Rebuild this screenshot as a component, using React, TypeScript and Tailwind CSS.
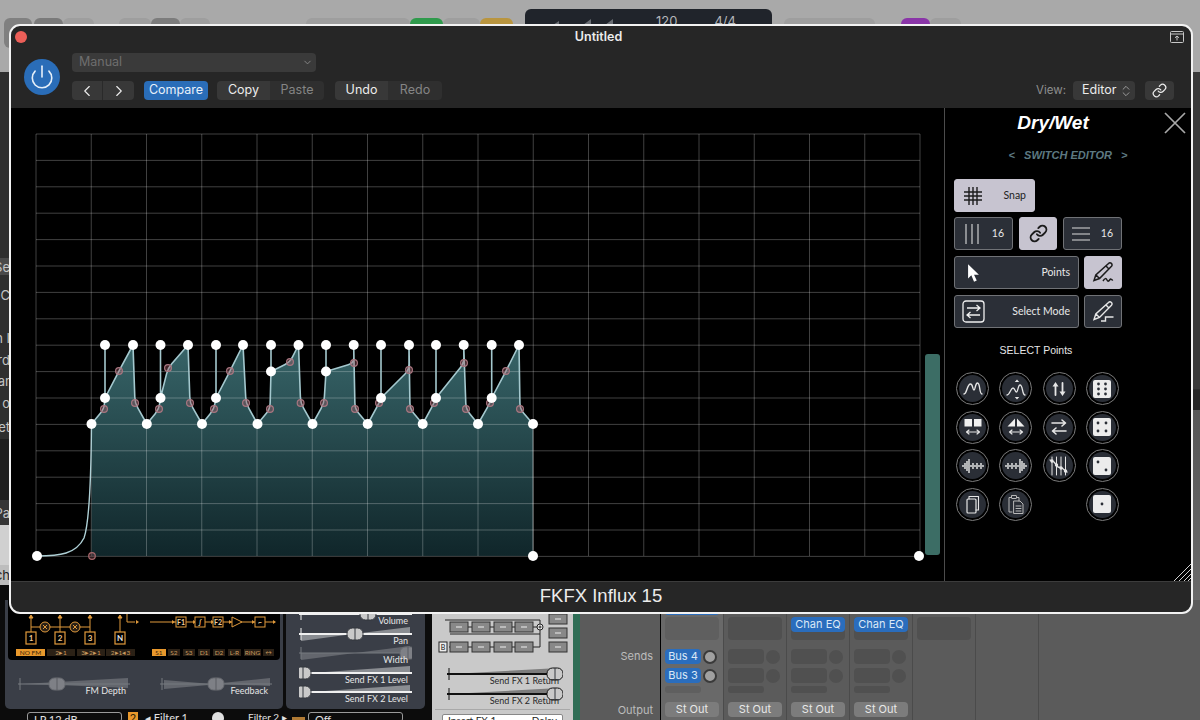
import { ChevronDown, ChevronLeft, ChevronRight, ChevronsUpDown, Link, Power } from 'lucide-react';
import type { ReactNode } from 'react';

type Pt = [number, number];

const teeth: { x: number; mid: Pt; h1: Pt; t1: number; t2: number; h2: Pt; h3: Pt }[] = [
  { x: 91.5, mid: [105, 398], h1: [104, 409], t1: 105, t2: 133, h2: [119, 371], h3: [135, 403] },
  { x: 146.8, mid: [160.5, 398], h1: [159, 409], t1: 160.5, t2: 188, h2: [168, 368], h3: [190, 403] },
  { x: 202, mid: [216, 398], h1: [214, 409], t1: 216, t2: 243, h2: [230, 371], h3: [246, 403] },
  { x: 257.5, mid: [271, 371.5], h1: [270, 409], t1: 271, t2: 298.5, h2: [290, 362], h3: [300.6, 403] },
  { x: 312.5, mid: [326, 371.5], h1: [324, 403], t1: 326, t2: 353.7, h2: [354, 363], h3: [355, 409] },
  { x: 367.7, mid: [381, 398], h1: [379, 403], t1: 381, t2: 409, h2: [409, 370], h3: [410, 409] },
  { x: 422.7, mid: [436, 398], h1: [434, 403], t1: 436, t2: 463.7, h2: [464, 363], h3: [466, 409] },
  { x: 478, mid: [491.7, 398], h1: [490, 403], t1: 491.7, t2: 519, h2: [506, 371], h3: [520, 409] },
];
const END_X = 533;
const BASE_Y = 424;
const TOP_Y = 345;

// line to the handle with a small rounded corner, then on to b
function via(a: Pt, h: Pt, b: Pt) {
  const toward = (from: Pt, to: Pt, d: number): Pt => {
    const len = Math.hypot(to[0] - from[0], to[1] - from[1]) || 1;
    return [from[0] + ((to[0] - from[0]) * d) / len, from[1] + ((to[1] - from[1]) * d) / len];
  };
  const p1 = toward(h, a, 6);
  const p2 = toward(h, b, 6);
  return `L${p1[0]} ${p1[1]} Q${h[0]} ${h[1]} ${p2[0]} ${p2[1]} L${b[0]} ${b[1]}`;
}

function teethPath() {
  let d = `M91.5 ${BASE_Y}`;
  teeth.forEach((t, i) => {
    const next = i < teeth.length - 1 ? teeth[i + 1].x : END_X;
    d += ' ' + via([t.x, BASE_Y], t.h1, t.mid);
    d += ` L${t.t1} ${TOP_Y} L${t.mid[0]} ${t.mid[1]}`;
    d += ' ' + via(t.mid, t.h2, [t.t2, TOP_Y]);
    d += ' ' + via([t.t2, TOP_Y], t.h3, [next, BASE_Y]);
  });
  return d;
}

function Graph() {
  const cols = Array.from({ length: 17 }, (_, i) => 36 + i * 55.25);
  const rows = Array.from({ length: 17 }, (_, i) => 134 + i * 26.4);
  const curve = teethPath();
  const handles: Pt[] = teeth.flatMap((t) => [t.h1, t.h2, t.h3]);
  const points: Pt[] = [
    [37, 556],
    [END_X, 556],
    [919, 556],
    [END_X, BASE_Y],
    ...teeth.flatMap((t): Pt[] => [[t.x, BASE_Y], t.mid, [t.t1, TOP_Y], [t.t2, TOP_Y]]),
  ];
  return (
    <svg viewBox="11 108 933 473" className="w-[933px] h-[473px] shrink-0 block">
      <defs>
        <linearGradient id="fill" gradientUnits="userSpaceOnUse" x1="0" y1="345" x2="0" y2="556">
          <stop offset="0" stopColor="#376468" />
          <stop offset="1" stopColor="#10262a" />
        </linearGradient>
      </defs>
      <path d={`${curve} L${END_X} 556 L91.5 556 Z`} fill="url(#fill)" />
      {cols.map((x) => (
        <line key={x} x1={x} x2={x} y1={134} y2={556} stroke="#fff" strokeOpacity={0.25} />
      ))}
      {rows.map((y) => (
        <line key={y} x1={36} x2={920} y1={y} y2={y} stroke="#fff" strokeOpacity={0.25} />
      ))}
      <path d="M37 556 C60 556 76 554 84 538 C89 524 91 490 91.5 424" fill="none" stroke="#aed0d6" strokeWidth={1.4} />
      <path d={curve} fill="none" stroke="#a4c8ce" strokeWidth={1.6} strokeLinejoin="round" />
      <line x1={END_X} x2={END_X} y1={BASE_Y} y2={556} stroke="#fff" strokeOpacity={0.4} />
      <circle cx={92} cy={556} r={3.3} fill="#a05a64" fillOpacity={0.3} stroke="#a8686c" strokeWidth={1.2} />
      {handles.map((h, i) => (
        <circle key={i} cx={h[0]} cy={h[1]} r={3.4} fill="#a05a64" fillOpacity={0.4} stroke="#a87680" strokeWidth={1.2} />
      ))}
      {points.map((p, i) => (
        <circle key={i} cx={p[0]} cy={p[1]} r={5} fill="#fff" />
      ))}
      <rect x={925} y={354} width={15} height={201} rx={3} fill="#3c6d65" />
    </svg>
  );
}

function Glyph({ children, size = 24 }: { children: ReactNode; size?: number }) {
  return (
    <svg viewBox="0 0 24 24" width={size} height={size} fill="none" stroke="#e6e6e6" strokeWidth={1.4} strokeLinecap="round" strokeLinejoin="round">
      {children}
    </svg>
  );
}

function Die({ dots }: { dots: Pt[] }) {
  return (
    <svg viewBox="0 0 24 24" width={24} height={24}>
      <rect x={3} y={3} width={18} height={18} rx={2} fill="#ececec" />
      {dots.map((d, i) => (
        <circle key={i} cx={d[0]} cy={d[1]} r={1.4} fill="#2a2e36" />
      ))}
    </svg>
  );
}

const arrowRows = ['...#.......', '..##.......', '.###.#.#.#.', '###########', '.###.#.#.#.', '..##.......', '...#.......'];

function DotArrow({ right }: { right?: boolean }) {
  return (
    <svg viewBox="0 0 24 24" width={24} height={24}>
      <g transform={right ? 'translate(24 0) scale(-1 1)' : undefined}>
        {arrowRows.flatMap((row, y) =>
          row.split('').map((c, x) => (c === '#' ? <circle key={`${x}-${y}`} cx={2 + x * 2} cy={6 + y * 2} r={0.9} fill="#f2f2f2" /> : null)),
        )}
      </g>
    </svg>
  );
}

const roundIcons: (ReactNode | null)[] = [
  <Glyph key="wave"><path d="M3 17C6 17 6 7 9.500 7C12 7 11.500 13 13 13C14.500 13 14 6 16.500 6C19.500 6 18 17 21 17" /></Glyph>,
  <Glyph key="wave2">
    <path d="M3 18C6 18 6.500 11 9 11C11 11 11 15 12.500 15C14 15 14 8 16 8C19 8 18 18 21 18" strokeWidth={1.3} />
    <path d="M13 2.500l-2.200 2.500h4.400zM13 22.500l-2.200-2.500h4.400z" fill="#e6e6e6" stroke="none" />
  </Glyph>,
  <Glyph key="updown">
    <path d="M8.500 18V8M15.500 6v10" strokeWidth={1.8} />
    <path d="M8.500 5l-3 4.500h6zM15.500 19l-3-4.500h6z" fill="#e6e6e6" stroke="none" />
  </Glyph>,
  <Die key="d6" dots={[[8.5, 7], [15.5, 7], [8.5, 12], [15.5, 12], [8.5, 17], [15.5, 17]]} />,
  <Glyph key="squares">
    <rect x={3.5} y={4} width={7.5} height={7.5} fill="#f0f0f0" stroke="none" />
    <rect x={13} y={4} width={7.5} height={7.5} fill="#f0f0f0" stroke="none" />
    <path d="M6 17h12M8 15l-2.500 2L8 19M16 15l2.500 2L16 19" strokeWidth={1.2} />
  </Glyph>,
  <Glyph key="tris">
    <path d="M11 3.500v8H3.500zM13 3.500v8h7.500z" fill="#f0f0f0" stroke="none" />
    <path d="M6 17h12M8 15l-2.500 2L8 19M16 15l2.500 2L16 19" strokeWidth={1.2} />
  </Glyph>,
  <Glyph key="swap"><path d="M5 8h13M15 5l3.500 3L15 11M19 16H6M9 13l-3.500 3L9 19" strokeWidth={1.6} /></Glyph>,
  <Die key="d4" dots={[[8, 8], [16, 8], [8, 16], [16, 16]]} />,
  <DotArrow key="dl" />,
  <DotArrow key="dr" right />,
  <Glyph key="faders">
    <path d="M5 3v18M9.500 3v18M14 3v18M18.500 3v18" strokeWidth={1} />
    <path d="M3 6l4 2 4 5 4 1 5 4" strokeWidth={1.3} />
    <circle cx={5} cy={7} r={1} fill="#fff" />
    <circle cx={9.5} cy={11} r={1} fill="#fff" />
    <circle cx={14} cy={14} r={1} fill="#fff" />
    <circle cx={18.5} cy={17} r={1} fill="#fff" />
  </Glyph>,
  <Die key="d2" dots={[[8, 8], [16, 16]]} />,
  <Glyph key="copy"><path d="M8 7V4.500h9.500V18H15" strokeWidth={1.1} /><rect x={6} y={7} width={9} height={14} rx={1} strokeWidth={1.2} /></Glyph>,
  <Glyph key="paste">
    <path d="M8 20H5V5.500h2.500M12.500 5.500H15V9" stroke="#b8b8b8" strokeWidth={1} />
    <rect x={7.5} y={3.5} width={5} height={3} rx={0.5} stroke="#b8b8b8" strokeWidth={1} />
    <path d="M10 9h6l3 3v9.500h-9zM12 14h5M12 16.500h5M12 19h5" stroke="#b8b8b8" strokeWidth={1} />
  </Glyph>,
  null,
  <Die key="d1" dots={[[12, 12]]} />,
];

function RoundButton({ icon }: { icon: ReactNode }) {
  return (
    <div className="w-[33px] h-[33px] rounded-full border-[1.5px] border-[#7b7b7b] p-[2px]">
      <div className="w-full h-full rounded-full bg-[#2a2e36] flex items-center justify-center">{icon}</div>
    </div>
  );
}

function PanelButton({ light, className, children }: { light?: boolean; className: string; children: ReactNode }) {
  return (
    <div
      className={`${className} h-[33px] rounded-[3px] flex items-center justify-between border ${
        light ? 'bg-[#c7c4d0] border-[#c7c4d0] text-[#222]' : 'bg-[#2b2f37] border-[#707276] text-[#e8e8e8]'
      }`}
    >
      {children}
    </div>
  );
}

const PENCIL = 'M17.500 2.500a2 2 0 0 1 3 2.800L8.500 17.500l-5.500 2 1.800-5.500z M15 5l3.200 3.200 M5 14l3.500 3.500';

function PanelSide() {
  const labelCls = "font-['Lato',sans-serif] text-[10.5px] leading-none";
  return (
    <div className="relative w-[247px] h-[473px] border-l border-[#4c4c4c] bg-black">
      <svg viewBox="0 0 22 22" className="absolute left-[219px] top-[4px] w-[22px] h-[22px]" stroke="#a8a8a8" strokeWidth={1.7}>
        <path d="M1 1l20 20M21 1L1 21" />
      </svg>
      <svg viewBox="0 0 17 17" className="absolute left-[229px] top-[456px] w-[17px] h-[17px]" stroke="#d0d0d0" strokeWidth={1}>
        <path d="M0 17L17 0M5 17L17 5M10 17l7-7M14 17l3-3" />
      </svg>
      <div className="w-[216px] pt-[3px] h-[27px] text-center text-white text-[19px] leading-[24px] font-bold italic font-['Liberation_Sans',sans-serif]">
        Dry/Wet
      </div>
      <div className="w-[246px] mt-[13px] h-[14px] text-center whitespace-pre text-[#5d7982] text-[11px] leading-[14px] font-bold italic font-['Liberation_Sans',sans-serif]">
        {'<   SWITCH EDITOR   >'}
      </div>
      <div className="pl-[9px] w-[177px]">
        <PanelButton light className="mt-[17px] w-[81px] pl-[8px] pr-[8px]">
          <svg viewBox="0 0 20 20" width={20} height={20} stroke="#1c1c1c" strokeWidth={1.4}>
            <path d="M6 1v18M10 1v18M14 1v18M1 6h18M1 10h18M1 14h18" />
          </svg>
          <span className={labelCls}>Snap</span>
        </PanelButton>
        <div className="mt-[5px] flex justify-between">
          <PanelButton className="w-[59px] pl-[9px] pr-[8px]">
            <svg viewBox="0 0 16 22" width={16} height={22} stroke="#dcdcdc" strokeWidth={1.1}>
              <path d="M2 1v20M8 1v20M14 1v20" />
            </svg>
            <span className={labelCls}>16</span>
          </PanelButton>
          <PanelButton light className="w-[38px] justify-center">
            <Link className="w-[19px] h-[19px] text-[#1c1c1c] mx-auto" strokeWidth={2.4} />
          </PanelButton>
          <PanelButton className="w-[59px] pl-[8px] pr-[8px]">
            <svg viewBox="0 0 18 16" width={18} height={16} stroke="#dcdcdc" strokeWidth={1.2}>
              <path d="M0 2h18M0 8h18M0 14h18" />
            </svg>
            <span className={labelCls}>16</span>
          </PanelButton>
        </div>
        <div className="mt-[6px] flex justify-between">
          <PanelButton className="w-[125px] pl-[12px] pr-[8px]">
            <svg viewBox="0 0 12 18" width={13} height={20} fill="#fff">
              <path d="M1 1v13l3-3 2.500 6 2.500-1-2.500-5.500H11z" />
            </svg>
            <span className={labelCls}>Points</span>
          </PanelButton>
          <PanelButton light className="w-[38px] justify-center">
            <svg viewBox="0 0 24 24" width={24} height={24} fill="none" stroke="#1c1c1c" strokeWidth={1.5} className="mx-auto">
              <path d={PENCIL} />
              <path d="M12 20c2-3 3-3 4-1s2 1 3-.5 1.500 1 3 .5" />
            </svg>
          </PanelButton>
        </div>
        <div className="mt-[6px] flex justify-between">
          <PanelButton className="w-[125px] pl-[7px] pr-[8px]">
            <svg viewBox="0 0 23 23" width={23} height={23} fill="none" stroke="#f0f0f0" strokeWidth={1.3}>
              <rect x={1} y={1} width={21} height={21} rx={3} />
              <path d="M5 8h13M14.500 5l3.500 3-3.500 3M18 15H5M8.500 12L5 15l3.500 3" />
            </svg>
            <span className={labelCls}>Select Mode</span>
          </PanelButton>
          <PanelButton className="w-[38px] justify-center">
            <svg viewBox="0 0 24 24" width={24} height={24} fill="none" stroke="#e6e6e6" strokeWidth={1.4} className="mx-auto">
              <path d={PENCIL} />
              <path d="M10 21h4.500v-4h3M17.500 17h5" />
            </svg>
          </PanelButton>
        </div>
        <div className="mt-[15px] h-[14px] pr-[4px] text-center text-[#e6e6e6] text-[10.5px] leading-[14px] font-['Liberation_Sans',sans-serif]">SELECT Points</div>
        <div className="mt-[15px] ml-[2px] grid grid-cols-[repeat(4,33px)] gap-x-[10.3px] gap-y-[5.5px]">
          {roundIcons.map((icon, i) => (icon ? <RoundButton key={i} icon={icon} /> : <div key={i} />))}
        </div>
      </div>
    </div>
  );
}

function Seg({ on, w, children }: { on?: boolean; w: string; children: ReactNode }) {
  return (
    <div className={`${w} h-full flex items-center justify-center ${on ? 'bg-[#383838] text-[#ececec]' : 'bg-[#2f2f2f] text-[#858585]'}`}>
      {children}
    </div>
  );
}

function PluginWindow() {
  return (
    <div className="absolute left-[9px] top-[24px] w-[1184px] h-[590px] border-2 border-[#f2f2f2] rounded-[11px] overflow-hidden bg-[#262626] flex flex-col font-['Inter',sans-serif]">
      <div className="h-[82px] shrink-0">
        <div className="h-[22px] flex items-center">
          <div className="ml-[4px] w-[12px] h-[12px] rounded-full bg-[#ec5f58]" />
          <div className="flex-1 text-center text-[12.5px] font-semibold text-[#ececec]">Untitled</div>
          <svg viewBox="0 0 14 12" width={14} height={12} fill="none" stroke="#c8c8c8" strokeWidth={1} className="mr-[7px]">
            <rect x={0.5} y={0.5} width={13} height={11} rx={1} />
            <path d="M0.500 3h13M7 9.500V5M5 6.800 7 5l2 1.800" />
          </svg>
        </div>
        <div className="flex mt-[5px]">
          <div className="ml-[13px] mt-[6px] w-[36px] h-[36px] rounded-full bg-[#2a6db8] flex items-center justify-center">
            <Power className="w-[26px] h-[26px] text-[#e4eef8]" strokeWidth={1.5} />
          </div>
          <div className="ml-[12px] flex-1 mr-[17px]">
            <div className="w-[244px] h-[19px] rounded-[4px] bg-[#3a3a3a] flex items-center justify-between pl-[7px] pr-[3px] text-[12.5px] text-[#6e6e6e]">
              Manual
              <ChevronDown className="w-[11px] h-[11px] text-[#8a8a8a]" />
            </div>
            <div className="mt-[9px] h-[19px] flex items-stretch text-[12.5px]">
              <div className="w-[62px] rounded-[4px] overflow-hidden flex">
                <Seg on w="w-[31px] border-r border-[#2a2a2a]"><ChevronLeft className="w-[18px] h-[18px]" strokeWidth={1.5} /></Seg>
                <Seg on w="w-[31px]"><ChevronRight className="w-[18px] h-[18px]" strokeWidth={1.5} /></Seg>
              </div>
              <div className="ml-[10px] w-[64px] rounded-[4px] bg-[#2a6db8] text-[#e8f1fa] flex items-center justify-center">Compare</div>
              <div className="ml-[9px] w-[107px] rounded-[4px] overflow-hidden flex">
                <Seg on w="w-[53px]">Copy</Seg>
                <Seg w="w-[54px]">Paste</Seg>
              </div>
              <div className="ml-[11px] w-[107px] rounded-[4px] overflow-hidden flex">
                <Seg on w="w-[53px]">Undo</Seg>
                <Seg w="w-[54px]">Redo</Seg>
              </div>
              <div className="ml-auto flex items-center text-[11.5px] text-[#8e8e8e]">View:</div>
              <div className="ml-[7px] w-[62px] rounded-[4px] bg-[#383838] text-[#ececec] flex items-center justify-between pl-[9px] pr-[2px]">
                Editor
                <ChevronsUpDown className="w-[14px] h-[14px] text-[#a8a8a8]" strokeWidth={1.5} />
              </div>
              <div className="ml-[10px] w-[29px] rounded-[4px] bg-[#383838] flex items-center justify-center">
                <Link className="w-[15px] h-[15px] text-[#ececec]" />
              </div>
            </div>
          </div>
        </div>
      </div>
      <div className="h-[473px] shrink-0 flex bg-black">
        <Graph />
        <PanelSide />
      </div>
      <div className="flex-1 pb-[1px] border-t border-[#3c3c3c] flex items-center justify-center text-[18.5px] leading-none text-[#ececec] font-['Liberation_Sans',sans-serif]">
        FKFX Influx 15
      </div>
    </div>
  );
}

function TopBar() {
  const pills = [
    'w-[28px] ml-[4px] bg-[#808080]',
    'w-[29px] ml-[2px] bg-[#7a7a7a]',
    'w-[31px] bg-[#9e9e9e]',
    'w-[32px] ml-[25px] bg-[#9e9e9e]',
    'w-[29px] bg-[#7c7c7c]',
    'w-[30px] bg-[#9e9e9e]',
    'w-[104px] ml-[96px] bg-[#9e9e9e]',
    'w-[33px] bg-[#2f9a4c]',
    'w-[37px] bg-[#9e9e9e]',
    'w-[33px] bg-[#b9953f]',
  ];
  return (
    <div className="h-[72px] shrink-0 bg-[#a9a9a9] flex items-start overflow-hidden">
      <div className="flex mt-[18px] h-[30px]">
        {pills.map((c, i) => (
          <div key={i} className={`${c} rounded-[6px]`} />
        ))}
      </div>
      <div className="ml-[12px] mt-[9px] w-[247px] h-[40px] rounded-[6px] bg-[#20242b] flex text-[#b4b6ba] text-[13px] leading-[24px] font-['Inter',sans-serif]">
        <svg viewBox="0 0 60 14" width={60} height={14} className="ml-[28px] mt-[9px]" fill="#6a6e74">
          <path d="M0 7l6-4v8zM30 7l8-6v12zM52 7l8-6v12z" />
        </svg>
        <span className="ml-[43px]">120</span>
        <span className="ml-[37px]">4/4</span>
      </div>
      <div className="ml-[12px] mt-[18px] w-[91px] h-[30px] rounded-[6px] bg-[#9e9e9e]" />
      <div className="ml-[26px] mt-[18px] w-[29px] h-[30px] rounded-[6px] bg-[#8a35a8]" />
      <div className="mt-[18px] w-[31px] h-[30px] rounded-[6px] bg-[#9e9e9e]" />
    </div>
  );
}

function Middle() {
  const left: [string, string, string][] = [
    ['h-[186px]', 'bg-[#2f2f2f]', ''],
    ['h-[17px]', 'bg-[#4a4a4a]', 'Se'],
    ['h-[40px]', 'bg-[#2f2f2f]', 'C'],
    ['h-[12px]', 'bg-[#2f2f2f]', ''],
    ['h-[22px]', 'bg-[#2f2f2f]', 'n I'],
    ['h-[22px]', 'bg-[#2f2f2f]', 'rd'],
    ['h-[20px]', 'bg-[#2f2f2f]', 'ar'],
    ['h-[24px]', 'bg-[#2f2f2f]', 'o'],
    ['h-[24px]', 'bg-[#2f2f2f]', 'et'],
    ['h-[61px]', 'bg-[#1f1f1f]', ''],
    ['h-[25px]', 'bg-[#363636]', 'Pa'],
    ['h-[40px]', 'bg-[#d0d0d0]', ''],
    ['h-[20px]', 'bg-[#bdbdbd] text-[#222]', 'ch'],
  ];
  return (
    <div className="h-[528px] shrink-0 flex justify-between bg-[#2a2a2a]">
      <div className="w-[10px] flex flex-col overflow-hidden bg-[#0c0c0c] text-[#c4c4c4] text-[13px] font-['Inter',sans-serif]">
        {left.map(([h, bg, t], i) => (
          <div key={i} className={`${h} ${bg} shrink-0 leading-[18px] whitespace-nowrap overflow-hidden flex justify-end items-center`}>
            {t}
          </div>
        ))}
      </div>
      <div className="w-[8px] flex flex-col">
        <div className="h-[318px] bg-[#3a3a3a] border-b border-[#2c2c2c]" />
        <div className="h-[20px] bg-[#262626]" />
        <div className="flex-1 bg-gradient-to-b from-[#575757] to-[#6a6a6a]" />
      </div>
    </div>
  );
}

type SliderProps = { wedge: string; handle: number; label: string; muted?: boolean; dark?: boolean; w: number };

function Slider({ wedge, handle, label, muted, dark, w }: SliderProps) {
  const line = dark ? '#111' : muted ? '#777a80' : '#f0f0f0';
  return (
    <div className="relative h-[19.5px]" style={{ width: w }}>
      <svg viewBox={`0 0 ${w} 20`} width={w} height={20} className="block">
        <polygon points={wedge} fill={dark ? '#7c7c7c' : muted ? '#63666d' : '#8a8d92'} />
        <line x1={0} x2={w} y1={10} y2={10} stroke={line} strokeWidth={muted ? 1 : 2} />
        <line x1={2} x2={2} y1={4} y2={16} stroke={line} />
        <rect x={handle - 8} y={4} width={16} height={12} rx={5.5} fill={muted ? '#7e8086' : '#c9c9c9'} stroke={dark ? '#111' : muted ? '#6a6c72' : '#33363c'} />
        <line x1={handle} x2={handle} y1={4} y2={16} stroke={muted ? '#5a5c62' : '#33363c'} />
      </svg>
      <span className={`absolute right-[4px] top-[11px] text-[9px] leading-[12px] whitespace-nowrap font-['Lato',sans-serif] ${dark ? 'text-[#2a2a2a]' : 'text-[#e6e6e6]'}`}>
        {label}
      </span>
    </div>
  );
}

function OscDisplay() {
  const o = '#e09a3c';
  const boxes: [number, string][] = [[31, '1'], [60, '2'], [90, '3'], [120, 'N']];
  const chips: [number, number, string, boolean][] = [
    [16, 29, 'NO FM', true], [47, 28, '2▸1', false], [77, 28, '3▸2▸1', false], [106, 29, '2▸1◂3', false],
    [152, 14, 'S1', true], [168, 12, 'S2', false], [183, 12, 'S3', false], [198, 12, 'D1', false], [213, 12, 'D2', false],
    [228, 13, 'L-R', false], [244, 17, 'RING', false], [263, 11, '↔', false],
  ];
  const fx: [number, string][] = [[181, 'F1'], [200, '∫'], [218, 'F2'], [260, '⌐']];
  const heads: Pt[] = [[172, 622], [193, 622], [211, 622], [229, 622], [252, 622], [273, 622], [136, 622]];
  return (
    <svg viewBox="8 600 272 60" className="w-[272px] h-[60px] block bg-black mx-[3px] rounded-b-[4px]" fill="none" stroke={o} strokeWidth={1}>
      <path d="M31 632V616M60 632V616M90 632V616M120 632V616M31 627H90M127 613V622H135" />
      <path d="M150 622H275" />
      {[31, 60, 90, 120].map((x) => (
        <path key={x} d={`M${x - 2} 618l2-3 2 3z`} fill={o} />
      ))}
      {heads.map(([x, y]) => (
        <path key={x} d={`M${x} ${y - 2}l3 2-3 2z`} fill={o} stroke="none" />
      ))}
      <circle cx={45} cy={627} r={5} fill="#2a2118" />
      <circle cx={75} cy={627} r={5} fill="#2a2118" />
      <path d="M43 625l4 4M47 625l-4 4M73 625l4 4M77 625l-4 4" />
      <path d="M232 617v10l10-5z" fill="#000" />
      {boxes.map(([x, t]) => (
        <g key={t}>
          <rect x={x - 5} y={632} width={10} height={12} fill="#000" strokeWidth={1.2} />
          <text x={x} y={641} textAnchor="middle" fill={t === 'N' ? '#e8e8e8' : '#f0c890'} stroke="none" fontSize={8} fontFamily="Lato, sans-serif" fontWeight={700}>{t}</text>
        </g>
      ))}
      {fx.map(([x, t]) => (
        <g key={x}>
          <rect x={x - 5} y={617} width={10} height={10} fill="#000" />
          <text x={x} y={625} textAnchor="middle" fill="#f0d0a0" stroke="none" fontSize={7} fontFamily="Lato, sans-serif" fontWeight={700}>{t}</text>
        </g>
      ))}
      {chips.map(([x, w, t, on]) => (
        <g key={t}>
          <rect x={x} y={649} width={w} height={7} fill={on ? '#e8982c' : '#2b2116'} stroke="none" />
          <text x={x + w / 2} y={655} textAnchor="middle" fill={on ? '#3a2208' : '#c99a5e'} stroke="none" fontSize={6.5} fontFamily="Lato, sans-serif">{t}</text>
        </g>
      ))}
    </svg>
  );
}

function SynthPanels() {
  const wedgeUp = (w: number, left = 4) => `${left},10 ${w - 2},3 ${w - 2},10`;
  return (
    <div className="w-[432px] shrink-0 flex flex-col">
      <div className="flex h-[109px] ml-[5px]">
        <div className="w-[278px] rounded-b-[5px] bg-[#3a3e47]">
          <OscDisplay />
          <div className="flex mt-[14px] ml-[13px] gap-[30px]">
            <Slider muted w={112} handle={39} label="FM Depth" wedge="4,10 110,4 110,14 40,11" />
            <Slider muted w={112} handle={56} label="Feedback" wedge="4,6 52,10 110,4 110,12 60,10 4,15" />
          </div>
        </div>
        <div className="ml-[3px] w-[139px] rounded-b-[5px] bg-[#3a3e47] pl-[13px] pt-[4px]">
          <Slider w={113} handle={69} label="Volume" wedge={wedgeUp(113)} />
          <Slider w={113} handle={56} label="Pan" wedge="2,10 2,17 54,10 111,3 111,10" />
          <Slider muted w={113} handle={109} label="Width" wedge="2,10 2,17 56,10 111,3 111,10" />
          <Slider w={113} handle={4} label="Send FX 1 Level" wedge={wedgeUp(113, 12)} />
          <Slider w={113} handle={4} label="Send FX 2 Level" wedge={wedgeUp(113, 12)} />
        </div>
      </div>
      <div className="h-[8px] mt-[3px] relative overflow-hidden flex items-start whitespace-nowrap text-[11px] leading-[11px] text-[#e2e2e2] font-['Lato',sans-serif] pl-[27px]">
        <div className="w-[95px] h-[10px] border border-[#9a9a9a] rounded-[3px] pl-[6px] pt-[1px]">LP 12 dB</div>
        <div className="ml-[6px] w-[10px] h-[10px] bg-[#e8982c] text-[#2a1a05] text-center">2</div>
        <div className="ml-[7px] w-[60px]">◂ Filter 1</div>
        <div className="ml-[7px] w-[12px] h-[12px] rounded-full bg-[#e0e0e0]" />
        <div className="ml-[24px] w-[40px] text-[10px]">Filter 2 ▸</div>
        <div className="ml-[4px] w-[13px] h-[3px] mt-[5px] bg-[#b07a34]" />
        <div className="ml-[3px] w-[95px] h-[10px] border border-[#9a9a9a] rounded-[3px] pl-[6px] pt-[1px]">Off</div>
      </div>
    </div>
  );
}

function FxPanel() {
  const blocks = [450, 472, 494, 515];
  const block = (x: number, y: number) => (
    <g key={`${x}-${y}`}>
      <rect x={x} y={y - 5} width={18} height={10} fill="#888" stroke="#333" />
      <line x1={x + 6} x2={x + 12} y1={y} y2={y} stroke="#eee" />
    </g>
  );
  return (
    <div className="w-[141px] shrink-0 bg-[#c9c9c9] relative">
      <svg viewBox="432 600 141 60" className="w-[141px] h-[60px] block" fill="none" stroke="#222" strokeWidth={1}>
        <path d="M445 620H540V647M468 627h4M489 627h5M511 627h4M533 627h5M450 634H540M449 647h91" />
        {blocks.map((x) => block(x, 627))}
        {blocks.map((x) => block(x, 647))}
        {[619, 633, 647].map((y) => block(549, y))}
        <circle cx={540} cy={627} r={3} fill="#eee" />
        <path d="M538.500 627h3M540 625.500v3" />
        <rect x={439} y={642} width={8} height={10} fill="#eee" />
        <text x={443} y={650} textAnchor="middle" fontSize={7} fill="#111" stroke="none" fontFamily="Lato, sans-serif">B</text>
      </svg>
      <div className="mt-[4px] ml-[15px]">
        <Slider dark w={116} handle={108} label="Send FX 1 Return" wedge="4,10 112,4 112,10" />
        <Slider dark w={116} handle={108} label="Send FX 2 Return" wedge="4,10 112,4 112,10" />
      </div>
      <div className="mx-[3px] mt-[6px] border-t border-[#a8a8a8] pt-[4px]">
        <div className="mx-[7px] h-[10px] bg-white rounded-[2px] border border-[#888] flex justify-between px-[5px] text-[10px] leading-[10px] text-[#222] font-['Lato',sans-serif]">
          <span>Insert FX 1</span>
          <span>Delay</span>
        </div>
      </div>
    </div>
  );
}

function Strip({ on, eq, sends = true }: { on?: boolean; eq?: boolean; sends?: boolean }) {
  const slot = on ? 'bg-[#5f5f5f]' : 'bg-[#505050]';
  const bus = (name: string) =>
    on ? (
      <div className="flex items-center gap-[2px]">
        <div className="w-[36px] h-[15px] rounded-[4px] bg-[#2a6dbd] text-[#dbe8f6] text-[11px] leading-[15px] text-center">{name}</div>
        <div className="w-[14px] h-[14px] rounded-full border-2 border-[#3a3a3a] bg-[#a0a0a0]" />
      </div>
    ) : (
      <div className="flex items-center gap-[2px]">
        <div className={`w-[36px] h-[15px] rounded-[4px] ${slot}`} />
        <div className={`w-[14px] h-[14px] rounded-full ${slot}`} />
      </div>
    );
  return (
    <div className={`w-[63px] shrink-0 border-r border-[#4b4b4b] px-[4px] ${on ? 'bg-[#696969]' : 'bg-[#5b5b5b]'}`}>
      <div className={`h-[15px] rounded-[3px] ${on ? 'bg-[#2a6dbd]' : 'bg-transparent'}`} />
      <div className={`mt-[2px] h-[23px] rounded-[4px] ${slot}`}>
        {eq && <div className="h-[15px] rounded-[4px] bg-[#2a6dbd] text-[#dbe8f6] text-[11px] leading-[15px] text-center">Chan EQ</div>}
      </div>
      {sends && (
        <>
          <div className="mt-[9px]">{bus('Bus 4')}</div>
          <div className="mt-[4px]">{bus('Bus 3')}</div>
          <div className={`mt-[3px] w-[36px] h-[7px] rounded-[3px] ${slot}`} />
          <div className="mt-[9px] h-[15px] rounded-[4px] bg-[#7c7c7c] text-[#e8e8e8] text-[11px] leading-[15px] text-center">St Out</div>
        </>
      )}
    </div>
  );
}

function Mixer() {
  return (
    <div className="flex-1 flex bg-[#5b5b5b] font-['Inter',sans-serif]">
      <div className="w-[81px] shrink-0 border-r border-black text-right pr-[7px] text-[11px] text-[#bcbcbc] leading-[14px]">
        <div className="mt-[49px]">Sends</div>
        <div className="mt-[40px]">Output</div>
      </div>
      <Strip on />
      <Strip />
      <Strip eq />
      <Strip eq />
      <Strip sends={false} />
      <div className="w-[63px] shrink-0 border-r border-[#4b4b4b]" />
    </div>
  );
}

export default function App() {
  return (
    <div className="relative w-[1200px] h-[720px] overflow-hidden flex flex-col bg-[#0c0c0c]">
      <TopBar />
      <Middle />
      <div className="h-[120px] shrink-0 flex overflow-hidden">
        <SynthPanels />
        <FxPanel />
        <div className="w-[7px] shrink-0 bg-[#2f6e56]" />
        <Mixer />
      </div>
      <PluginWindow />
    </div>
  );
}
